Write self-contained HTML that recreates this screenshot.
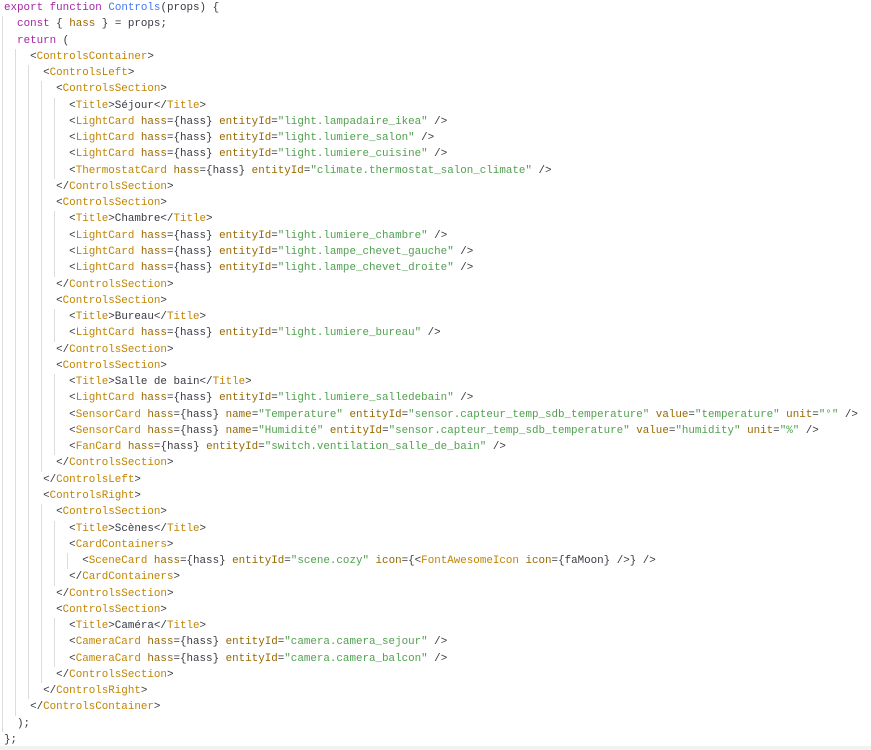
<!DOCTYPE html>
<html><head><meta charset="utf-8"><style>
body{margin:0;background:#fff;width:871px;height:750px;overflow:hidden;position:relative}
.c{position:absolute;left:0;top:0;font-family:"Liberation Mono",monospace;font-size:10.87px;color:#383a42}
.l{position:relative;height:16.27px;line-height:16.27px;padding-left:4px;white-space:pre}
.g{position:absolute;left:2px;top:0;height:16.27px;background:repeating-linear-gradient(to right,#dcdcdc 0 1px,transparent 1px 13.04px)}
.k{color:#a626a4}.f{color:#4078f2}.t{color:#c18401}.a{color:#986801}.s{color:#50a14f}
.bot{position:absolute;left:0;right:0;top:746px;height:4px;background:#f2f2f2}
</style></head><body><div class="c">
<div class="l"><span class="k">export</span> <span class="k">function</span> <span class="f">Controls</span>(props) {</div>
<div class="l"><span class="g" style="width:13px"></span>  <span class="k">const</span> { <span class="a">hass</span> } = props;</div>
<div class="l"><span class="g" style="width:13px"></span>  <span class="k">return</span> (</div>
<div class="l"><span class="g" style="width:26px"></span>    &lt;<span class="t">ControlsContainer</span>&gt;</div>
<div class="l"><span class="g" style="width:39px"></span>      &lt;<span class="t">ControlsLeft</span>&gt;</div>
<div class="l"><span class="g" style="width:52px"></span>        &lt;<span class="t">ControlsSection</span>&gt;</div>
<div class="l"><span class="g" style="width:65px"></span>          &lt;<span class="t">Title</span>&gt;Séjour&lt;/<span class="t">Title</span>&gt;</div>
<div class="l"><span class="g" style="width:65px"></span>          &lt;<span class="t">LightCard</span> <span class="a">hass</span>={hass} <span class="a">entityId</span>=<span class="s">"light.lampadaire_ikea"</span> /&gt;</div>
<div class="l"><span class="g" style="width:65px"></span>          &lt;<span class="t">LightCard</span> <span class="a">hass</span>={hass} <span class="a">entityId</span>=<span class="s">"light.lumiere_salon"</span> /&gt;</div>
<div class="l"><span class="g" style="width:65px"></span>          &lt;<span class="t">LightCard</span> <span class="a">hass</span>={hass} <span class="a">entityId</span>=<span class="s">"light.lumiere_cuisine"</span> /&gt;</div>
<div class="l"><span class="g" style="width:65px"></span>          &lt;<span class="t">ThermostatCard</span> <span class="a">hass</span>={hass} <span class="a">entityId</span>=<span class="s">"climate.thermostat_salon_climate"</span> /&gt;</div>
<div class="l"><span class="g" style="width:52px"></span>        &lt;/<span class="t">ControlsSection</span>&gt;</div>
<div class="l"><span class="g" style="width:52px"></span>        &lt;<span class="t">ControlsSection</span>&gt;</div>
<div class="l"><span class="g" style="width:65px"></span>          &lt;<span class="t">Title</span>&gt;Chambre&lt;/<span class="t">Title</span>&gt;</div>
<div class="l"><span class="g" style="width:65px"></span>          &lt;<span class="t">LightCard</span> <span class="a">hass</span>={hass} <span class="a">entityId</span>=<span class="s">"light.lumiere_chambre"</span> /&gt;</div>
<div class="l"><span class="g" style="width:65px"></span>          &lt;<span class="t">LightCard</span> <span class="a">hass</span>={hass} <span class="a">entityId</span>=<span class="s">"light.lampe_chevet_gauche"</span> /&gt;</div>
<div class="l"><span class="g" style="width:65px"></span>          &lt;<span class="t">LightCard</span> <span class="a">hass</span>={hass} <span class="a">entityId</span>=<span class="s">"light.lampe_chevet_droite"</span> /&gt;</div>
<div class="l"><span class="g" style="width:52px"></span>        &lt;/<span class="t">ControlsSection</span>&gt;</div>
<div class="l"><span class="g" style="width:52px"></span>        &lt;<span class="t">ControlsSection</span>&gt;</div>
<div class="l"><span class="g" style="width:65px"></span>          &lt;<span class="t">Title</span>&gt;Bureau&lt;/<span class="t">Title</span>&gt;</div>
<div class="l"><span class="g" style="width:65px"></span>          &lt;<span class="t">LightCard</span> <span class="a">hass</span>={hass} <span class="a">entityId</span>=<span class="s">"light.lumiere_bureau"</span> /&gt;</div>
<div class="l"><span class="g" style="width:52px"></span>        &lt;/<span class="t">ControlsSection</span>&gt;</div>
<div class="l"><span class="g" style="width:52px"></span>        &lt;<span class="t">ControlsSection</span>&gt;</div>
<div class="l"><span class="g" style="width:65px"></span>          &lt;<span class="t">Title</span>&gt;Salle de bain&lt;/<span class="t">Title</span>&gt;</div>
<div class="l"><span class="g" style="width:65px"></span>          &lt;<span class="t">LightCard</span> <span class="a">hass</span>={hass} <span class="a">entityId</span>=<span class="s">"light.lumiere_salledebain"</span> /&gt;</div>
<div class="l"><span class="g" style="width:65px"></span>          &lt;<span class="t">SensorCard</span> <span class="a">hass</span>={hass} <span class="a">name</span>=<span class="s">"Temperature"</span> <span class="a">entityId</span>=<span class="s">"sensor.capteur_temp_sdb_temperature"</span> <span class="a">value</span>=<span class="s">"temperature"</span> <span class="a">unit</span>=<span class="s">"°"</span> /&gt;</div>
<div class="l"><span class="g" style="width:65px"></span>          &lt;<span class="t">SensorCard</span> <span class="a">hass</span>={hass} <span class="a">name</span>=<span class="s">"Humidité"</span> <span class="a">entityId</span>=<span class="s">"sensor.capteur_temp_sdb_temperature"</span> <span class="a">value</span>=<span class="s">"humidity"</span> <span class="a">unit</span>=<span class="s">"%"</span> /&gt;</div>
<div class="l"><span class="g" style="width:65px"></span>          &lt;<span class="t">FanCard</span> <span class="a">hass</span>={hass} <span class="a">entityId</span>=<span class="s">"switch.ventilation_salle_de_bain"</span> /&gt;</div>
<div class="l"><span class="g" style="width:52px"></span>        &lt;/<span class="t">ControlsSection</span>&gt;</div>
<div class="l"><span class="g" style="width:39px"></span>      &lt;/<span class="t">ControlsLeft</span>&gt;</div>
<div class="l"><span class="g" style="width:39px"></span>      &lt;<span class="t">ControlsRight</span>&gt;</div>
<div class="l"><span class="g" style="width:52px"></span>        &lt;<span class="t">ControlsSection</span>&gt;</div>
<div class="l"><span class="g" style="width:65px"></span>          &lt;<span class="t">Title</span>&gt;Scènes&lt;/<span class="t">Title</span>&gt;</div>
<div class="l"><span class="g" style="width:65px"></span>          &lt;<span class="t">CardContainers</span>&gt;</div>
<div class="l"><span class="g" style="width:78px"></span>            &lt;<span class="t">SceneCard</span> <span class="a">hass</span>={hass} <span class="a">entityId</span>=<span class="s">"scene.cozy"</span> <span class="a">icon</span>={&lt;<span class="t">FontAwesomeIcon</span> <span class="a">icon</span>={faMoon} /&gt;} /&gt;</div>
<div class="l"><span class="g" style="width:65px"></span>          &lt;/<span class="t">CardContainers</span>&gt;</div>
<div class="l"><span class="g" style="width:52px"></span>        &lt;/<span class="t">ControlsSection</span>&gt;</div>
<div class="l"><span class="g" style="width:52px"></span>        &lt;<span class="t">ControlsSection</span>&gt;</div>
<div class="l"><span class="g" style="width:65px"></span>          &lt;<span class="t">Title</span>&gt;Caméra&lt;/<span class="t">Title</span>&gt;</div>
<div class="l"><span class="g" style="width:65px"></span>          &lt;<span class="t">CameraCard</span> <span class="a">hass</span>={hass} <span class="a">entityId</span>=<span class="s">"camera.camera_sejour"</span> /&gt;</div>
<div class="l"><span class="g" style="width:65px"></span>          &lt;<span class="t">CameraCard</span> <span class="a">hass</span>={hass} <span class="a">entityId</span>=<span class="s">"camera.camera_balcon"</span> /&gt;</div>
<div class="l"><span class="g" style="width:52px"></span>        &lt;/<span class="t">ControlsSection</span>&gt;</div>
<div class="l"><span class="g" style="width:39px"></span>      &lt;/<span class="t">ControlsRight</span>&gt;</div>
<div class="l"><span class="g" style="width:26px"></span>    &lt;/<span class="t">ControlsContainer</span>&gt;</div>
<div class="l"><span class="g" style="width:13px"></span>  );</div>
<div class="l">};</div>
</div><div class="bot"></div></body></html>
